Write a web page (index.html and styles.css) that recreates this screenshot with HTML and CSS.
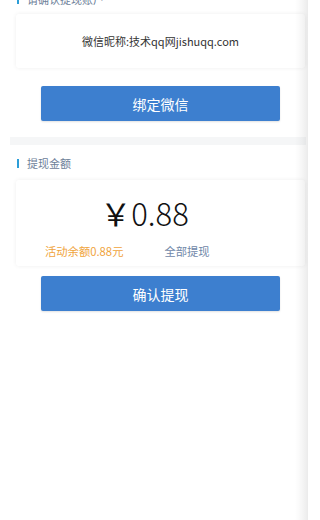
FILE: index.html
```html
<!DOCTYPE html>
<html lang="zh-CN">
<head>
<meta charset="utf-8">
<meta name="viewport" content="width=device-width, initial-scale=1">
<title>提现</title>
<link rel="stylesheet" href="styles.css">
</head>
<body>
<div class="page">
  <div class="section-title"><span class="bar"></span>请确认提现账户</div>
  <div class="card card-account">微信昵称:技术qq网jishuqq.com</div>
  <div class="btn btn-bind">绑定微信</div>

  <div class="divider"></div>

  <div class="section-title"><span class="bar"></span>提现金额</div>
  <div class="card card-amount">
    <div class="amount"><span class="yen">￥</span>0.88</div>
    <div class="amount-row">
      <span class="balance">活动余额0.88元</span>
      <span class="all">全部提现</span>
    </div>
  </div>
  <div class="btn btn-confirm">确认提现</div>
</div>
</body>
</html>
```

FILE: styles.css
```css
html, body {
  margin: 0;
  padding: 0;
  background: #ffffff;
}
body {
  font-family: "Noto Sans CJK SC", "Noto Sans", sans-serif;
  color: #333;
  overflow: hidden;
  width: 308px;
  height: 520px;
  position: relative;
}
body::after {
  content: "";
  position: absolute;
  top: 0;
  right: 0;
  bottom: 0;
  width: 13px;
  pointer-events: none;
  background: linear-gradient(to right, rgba(0,0,0,0) 0%, rgba(0,0,0,0.03) 50%, rgba(0,0,0,0.08) 100%);
}
.page {
  width: 308px;
  margin-top: -10px;
  display: flex;
  flex-direction: column;
}
.section-title {
  display: flex;
  align-items: center;
  height: 18px;
  padding-left: 17px;
  font-size: 11px;
  color: #6d8099;
}
.section-title .bar {
  width: 2px;
  height: 9px;
  background: #2c9ed8;
  margin-right: 8px;
}
.card {
  margin: 6px 3px 0 16px;
  background: #fff;
  border-radius: 3px;
  box-shadow: 0 0 4px rgba(0, 0, 0, 0.07);
}
.card-account {
  height: 54px;
  display: flex;
  align-items: center;
  justify-content: center;
  font-size: 11px;
  color: #333;
}
.btn {
  margin: 18px 28px 0 41px;
  height: 35px;
  background: #3d7fcf;
  border-radius: 2px;
  color: #fff;
  font-size: 14px;
  display: flex;
  align-items: center;
  justify-content: center;
  box-shadow: 0 1px 2px rgba(0, 0, 0, 0.12);
}
.divider {
  margin: 16px 2px 0 10px;
  height: 8px;
  background: #f5f6f7;
}
.divider + .section-title {
  margin-top: 9px;
}
.card-amount {
  margin-top: 8px;
  height: 86px;
  box-sizing: border-box;
  padding-top: 15px;
  display: flex;
  flex-direction: column;
}
.amount {
  height: 36px;
  line-height: 36px;
  text-align: center;
  padding-right: 32px;
  font-size: 31px;
  color: #111;
  font-weight: 300;
}
.amount .yen {
  font-weight: 400;
}
.amount-row {
  margin-top: 12px;
  height: 16px;
  line-height: 16px;
  display: flex;
  gap: 41px;
  padding-left: 29px;
  font-size: 11.3px;
}
.balance {
  color: #f0a43c;
}
.all {
  color: #6f87a8;
}
.btn-confirm {
  margin-top: 10px;
}
```
